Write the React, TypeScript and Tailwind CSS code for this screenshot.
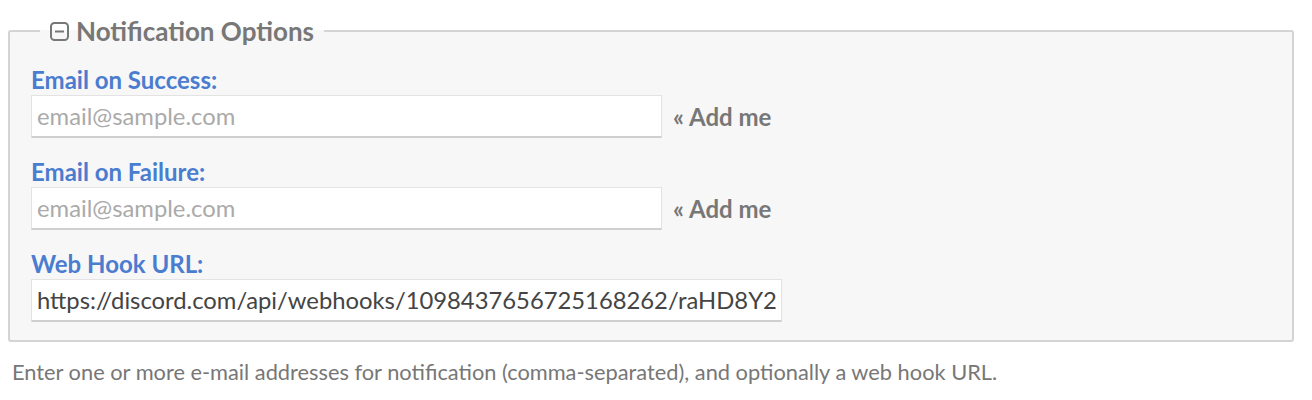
import { useState } from "react";

function SquareMinus() {
  return (
    <svg width="19" height="19" viewBox="0 0 19 19" fill="none" className="mr-[7px] shrink-0">
      <rect x="1" y="1" width="17" height="17" rx="3.5" stroke="#777" strokeWidth="2" />
      <line x1="5" y1="9.5" x2="14" y2="9.5" stroke="#777" strokeWidth="2" />
    </svg>
  );
}

interface EmailRowProps {
  label: string;
  value: string;
  onChange: (v: string) => void;
}

function EmailRow({ label, value, onChange }: EmailRowProps) {
  return (
    <div className="mb-5">
      <label className="block text-[24px] leading-7 font-bold text-[#4a7ccf]">{label}</label>
      <div className="mt-px flex items-center">
        <input
          type="text"
          value={value}
          onChange={(e) => onChange(e.target.value)}
          placeholder="email@sample.com"
          className="h-[43px] w-[631px] border border-[#e3e3e3] border-b-2 border-b-[#cfcfcf] bg-white px-[5px] text-[23.8px] text-[#444] placeholder:text-[#aaa] outline-none"
        />
        <span className="ml-[11px] text-[24px] font-bold text-[#777]">« Add me</span>
      </div>
    </div>
  );
}

export default function App() {
  const [success, setSuccess] = useState("");
  const [failure, setFailure] = useState("");
  const [hook, setHook] = useState("https://discord.com/api/webhooks/1098437656725168262/raHD8Y2");

  return (
    <div className="min-h-[400px] bg-white font-['Lato','Liberation_Sans',sans-serif]">
      <fieldset className="ml-2 mr-[18px] mt-[15px] rounded-[3px] border-2 border-[#d4d4d4] bg-[#f7f7f7] pb-[18px] pl-[21px] pr-4 pt-[19px]">
        <legend className="ml-[9px] flex items-center px-[10px] text-[26px] leading-8 font-bold text-[#777]">
          <SquareMinus />
          Notification Options
        </legend>
        <EmailRow label="Email on Success:" value={success} onChange={setSuccess} />
        <EmailRow label="Email on Failure:" value={failure} onChange={setFailure} />
        <div>
          <label className="block text-[24px] leading-7 font-bold text-[#4a7ccf]">Web Hook URL:</label>
          <input
            type="text"
            value={hook}
            onChange={(e) => setHook(e.target.value)}
            className="mt-px h-[43px] w-[751px] border border-[#e3e3e3] border-b-2 border-b-[#cfcfcf] bg-white px-[5px] text-[23.8px] text-[#444] outline-none"
          />
        </div>
      </fieldset>
      <p className="ml-3 mt-[18px] text-[21.8px] leading-6 text-[#777]">
        Enter one or more e-mail addresses for notification (comma-separated), and optionally a web hook URL.
      </p>
    </div>
  );
}
